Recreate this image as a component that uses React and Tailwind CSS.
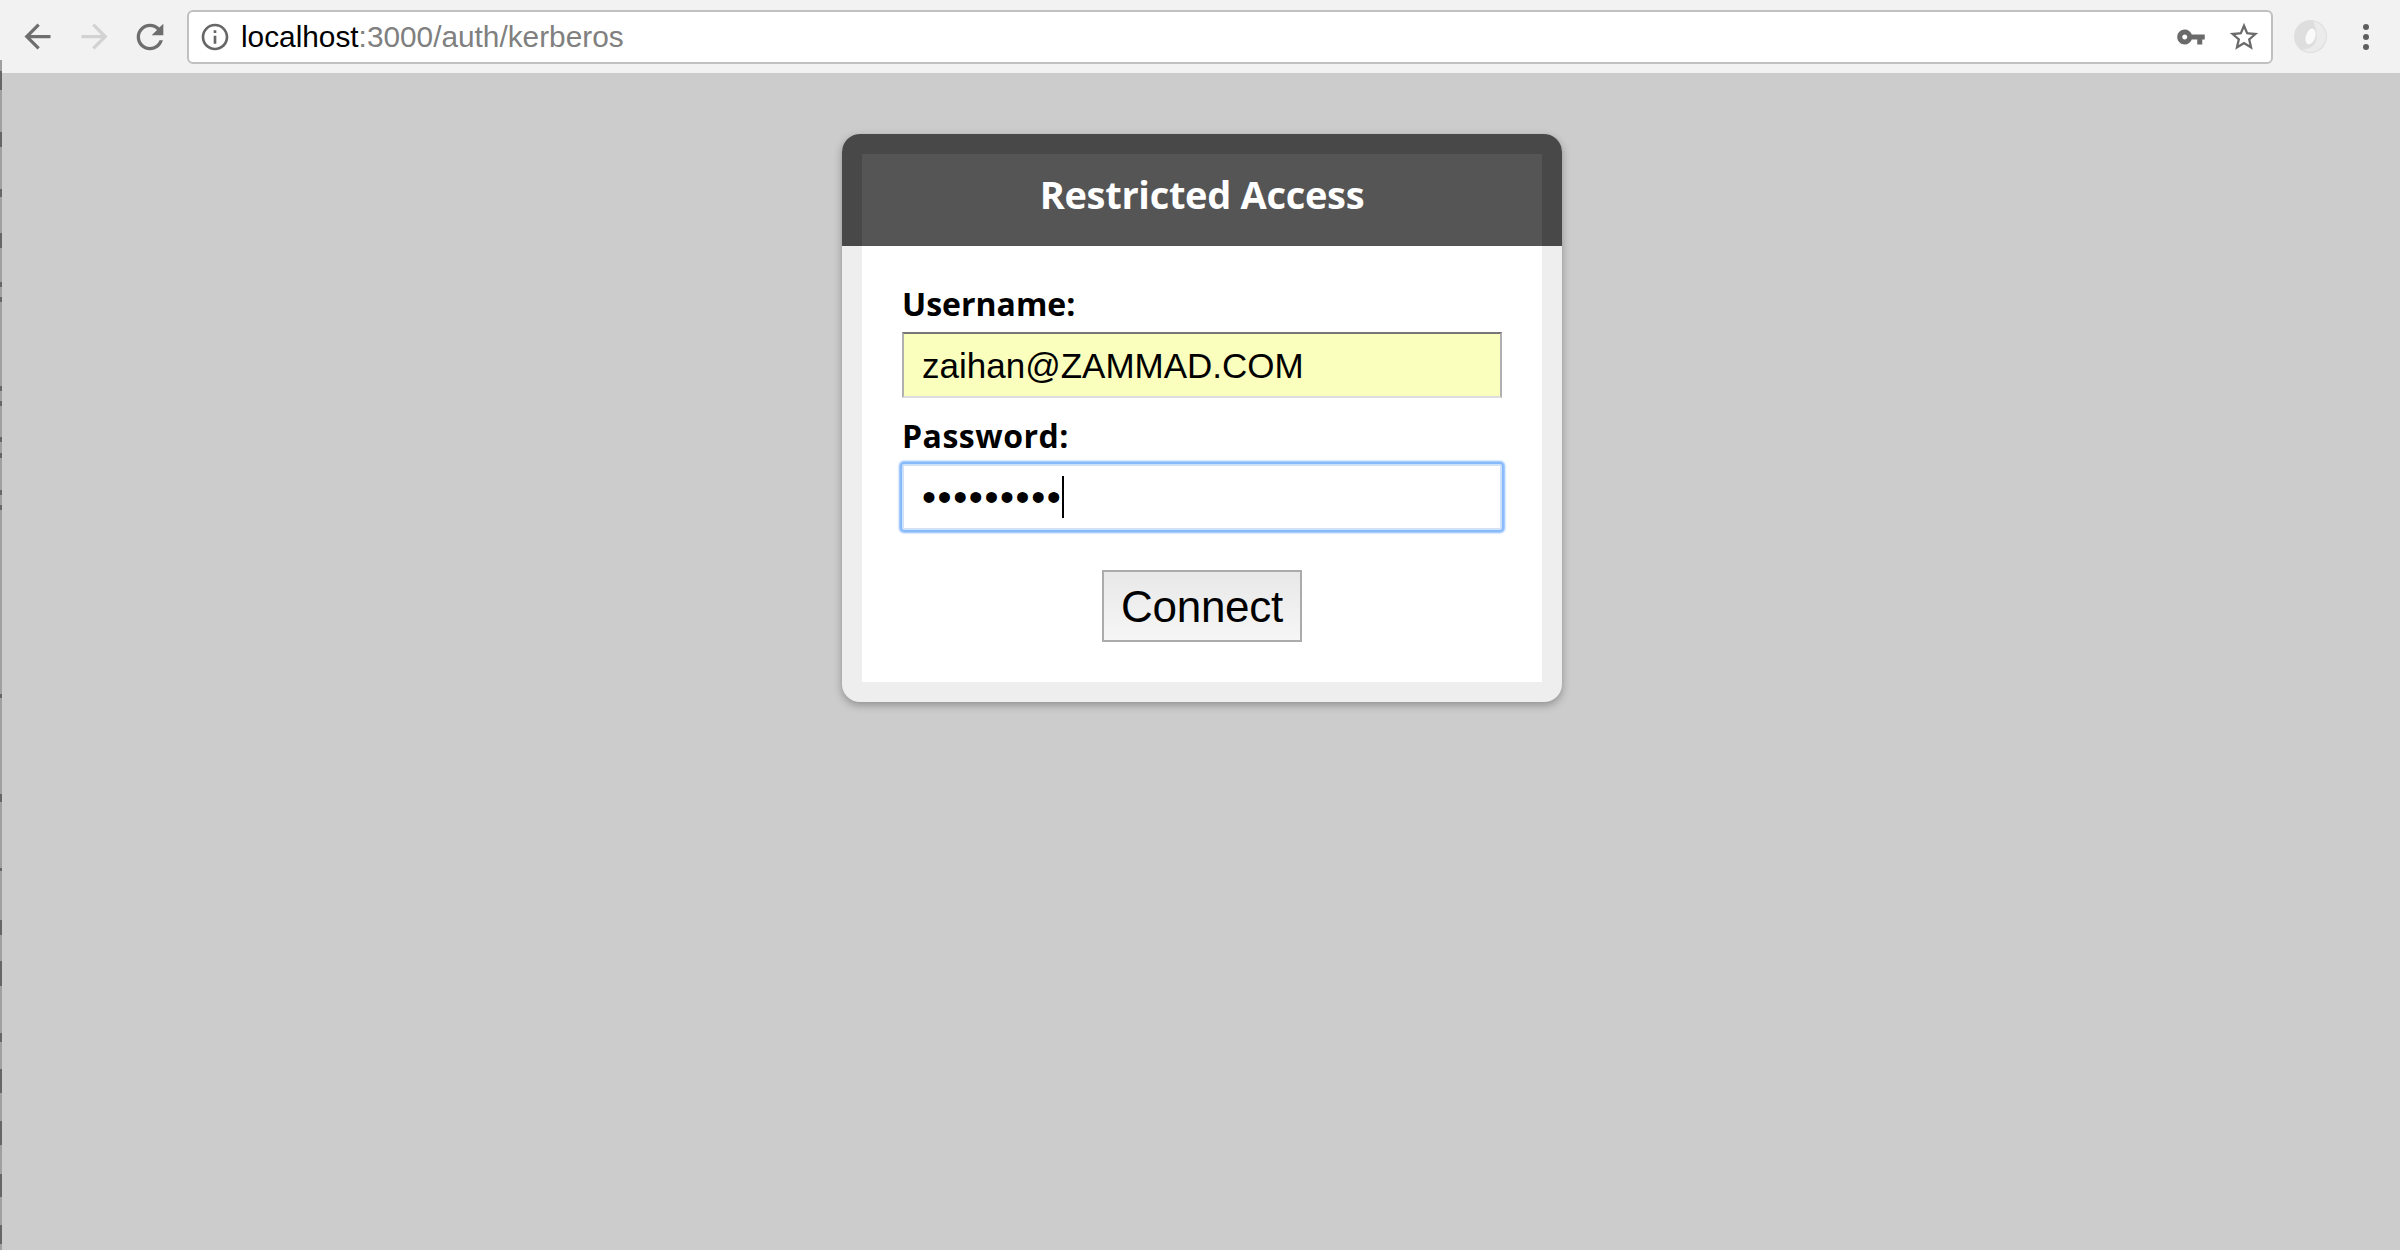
const edgeMarks = [
    [71, 19], [132, 15], [189, 8], [233, 15], [282, 5], [297, 5], [386, 5], [401, 5], [437, 5], [453, 5], [490, 5],
    [505, 5], [694, 4], [794, 8], [868, 3], [920, 15], [961, 25], [1033, 9], [1069, 24], [1121, 24], [1174, 23], [1225, 19],
];

const IconButton = ({ d, size, color, className }) => (
    <svg viewBox="0 0 24 24" width={size} height={size} fill={color} className={className}>
        <path d={d} />
    </svg>
);

const App = () => {
    return (
        <div className="relative flex h-screen w-full flex-col overflow-hidden bg-[#cccccc] font-['Liberation_Sans',sans-serif]">
            {/* browser toolbar */}
            <div className="flex h-[73px] shrink-0 items-center bg-[#f2f2f2] pl-[18px]">
                <IconButton size={39} color="#6e6e6e" d="M20 11H7.83l5.59-5.59L12 4l-8 8 8 8 1.41-1.41L7.83 13H20v-2z" />
                <IconButton size={39} color="#d2d2d2" className="ml-[18px]" d="M12 4l-1.41 1.41L16.17 11H4v2h12.17l-5.58 5.59L12 20l8-8z" />
                <IconButton size={40} color="#6e6e6e" className="ml-[16px]" d="M17.65 6.35C16.2 4.9 14.21 4 12 4c-4.42 0-7.99 3.58-7.99 8s3.57 8 7.99 8c3.73 0 6.84-2.55 7.73-6h-2.08c-.82 2.33-3.04 4-5.65 4-3.31 0-6-2.69-6-6s2.69-6 6-6c1.66 0 3.14.69 4.22 1.78L13 11h7V4l-2.35 2.35z" />

                <div className="ml-[17px] flex h-[54px] flex-1 items-center rounded-[6px] border-2 border-[#c0c0c0] bg-white pl-[10px] pr-[10px]">
                    <IconButton size={32} color="#666666" d="M11 7h2v2h-2zm0 4h2v6h-2zm1-9C6.48 2 2 6.48 2 12s4.48 10 10 10 10-4.48 10-10S17.52 2 12 2zm0 18c-4.41 0-8-3.59-8-8s3.59-8 8-8 8 3.59 8 8-3.59 8-8 8z" />
                    <span className="ml-[10px] text-[29.8px] leading-none text-black">
                        localhost<span className="text-[#808080]">:3000/auth/kerberos</span>
                    </span>
                    <div className="ml-auto flex items-center">
                        <IconButton size={30} color="#6a6a6a" d="M12.65 10C11.83 7.67 9.61 6 7 6c-3.31 0-6 2.69-6 6s2.69 6 6 6c2.61 0 4.83-1.67 5.65-4H17v4h4v-4h2v-4H12.65zM7 14c-1.1 0-2-.9-2-2s.9-2 2-2 2 .9 2 2-.9 2-2 2z" />
                        <IconButton size={34} color="#6a6a6a" className="ml-[21px]" d="M22 9.24l-7.19-.62L12 2 9.19 8.63 2 9.24l5.46 4.73L5.82 21 12 17.27 18.18 21l-1.63-7.03L22 9.24zM12 15.4l-3.76 2.27 1-4.28-3.32-2.88 4.38-.38L12 6.1l1.71 4.04 4.38.38-3.32 2.88 1 4.28L12 15.4z" />
                    </div>
                </div>

                {/* extension icon */}
                <svg viewBox="0 0 32 32" width={33} height={33} className="ml-[21px]">
                    <circle cx="16" cy="16" r="16" fill="#dedede" />
                    <path d="M19 1C26 3 31 9 31 16c0 8-7 15-15 15-3 0-6-1-8-3 6 1 14-3 14-12 0-6-2-11-3-15z" fill="#ebebeb" />
                    <ellipse cx="16" cy="16" rx="4.5" ry="8" transform="rotate(18 16 16)" fill="#fafafa" />
                </svg>
                <div className="ml-[36px] mr-[31px] flex flex-col gap-[4px]">
                    <span className="size-[6px] rounded-full bg-[#5f5f5f]" />
                    <span className="size-[6px] rounded-full bg-[#5f5f5f]" />
                    <span className="size-[6px] rounded-full bg-[#5f5f5f]" />
                </div>
            </div>

            {/* page */}
            <div className="flex flex-1 justify-center pl-[4px] pt-[61px]">
                <div className="h-[568px] w-[720px] rounded-[18px] bg-[#eeeeee] shadow-[0_3px_8px_rgba(0,0,0,0.3)]">
                    <div className="rounded-t-[18px] bg-[#484848] px-[20px] pt-[20px]">
                        <div className="flex h-[92px] items-center justify-center bg-[#555555] pb-[11px] font-['Open_Sans',sans-serif] text-[38px] font-bold tracking-[-0.3px] text-white">
                            Restricted Access
                        </div>
                    </div>
                    <div className="mx-[20px] flex h-[436px] flex-col bg-white px-[40px] pt-[38px] text-black">
                        <label className="mb-[8px] h-[40px] font-['Open_Sans',sans-serif] text-[32px] font-bold leading-[40px]">Username:</label>
                        <input
                            readOnly
                            value="zaihan@ZAMMAD.COM"
                            className="h-[66px] w-full border-2 border-t-[#767676] border-r-[#b0b0b0] border-b-[#dddddd] border-l-[#b0b0b0] bg-[#faffbd] pl-[18px] pt-[2px] text-[35px] text-black outline-none"
                        />
                        <label className="mb-[8px] mt-[18px] h-[40px] font-['Open_Sans',sans-serif] text-[32px] font-bold leading-[40px] tracking-[0.5px]">Password:</label>
                        <div className="flex h-[66px] w-full items-center rounded-[2px] border-2 border-[#cfe2fa] bg-white pl-[18px] text-[40px] leading-none shadow-[0_0_2px_3px_#85b9fb]">
                            <span className="tracking-[1.6px]">•••••••••</span>
                            <span className="h-[42px] w-[2px] bg-black" />
                        </div>
                        <button className="mx-auto mt-[40px] h-[72px] w-[200px] border-2 border-[#ababab] bg-gradient-to-b from-[#e8e8e8] to-[#f6f6f6] pt-[2px] text-[44px] leading-none tracking-[-0.3px] text-black">
                            Connect
                        </button>
                    </div>
                </div>
            </div>

            {/* scraps of the window behind, along the left edge */}
            <div className="absolute bottom-0 left-0 top-[60px] w-[2px] bg-[#a0a0a0]" />
            {edgeMarks.map(([y, h]) => (
                <div key={y} className="absolute left-0 w-[2px] bg-[#666666]" style={{ top: y, height: h }} />
            ))}
        </div>
    );
};

export default App;
